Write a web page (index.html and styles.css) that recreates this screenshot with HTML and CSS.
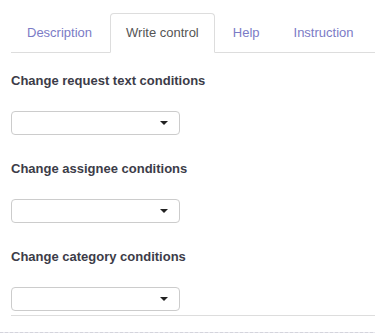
FILE: index.html
```html
<!DOCTYPE html>
<html>
<head>
<meta charset="utf-8">
<link rel="stylesheet" href="styles.css">
</head>
<body>
<div class="page">
  <ul class="tabs">
    <li class="tab"><a href="#">Description</a></li>
    <li class="tab active"><a href="#">Write control</a></li>
    <li class="tab"><a href="#">Help</a></li>
    <li class="tab"><a href="#">Instruction</a></li>
  </ul>
  <div class="form">
    <div class="group">
      <div class="label">Change request text conditions</div>
      <div class="select"><span class="caret"></span></div>
    </div>
    <div class="group">
      <div class="label">Change assignee conditions</div>
      <div class="select"><span class="caret"></span></div>
    </div>
    <div class="group">
      <div class="label">Change category conditions</div>
      <div class="select"><span class="caret"></span></div>
    </div>
  </div>
  <div class="rule"></div>
</div>
<div class="footer"></div>
</body>
</html>
```
FILE: styles.css
```css
html, body {
  margin: 0;
  padding: 0;
  background: #fff;
  font-family: "Liberation Sans", Arial, sans-serif;
  font-size: 13px;
}
.page {
  padding: 13px 0 0 11px;
}
.tabs {
  display: flex;
  list-style: none;
  margin: 0;
  padding: 0;
  border-bottom: 1px solid #ddd;
}
.tab {
  margin-bottom: -1px;
  margin-right: 2px;
}
.tab a {
  display: block;
  padding: 10px 15px;
  line-height: 18px;
  border: 1px solid transparent;
  border-radius: 4px 4px 0 0;
  color: #7b7bc6;
  text-decoration: none;
}
.tab.active a {
  color: #555;
  background: #fff;
  border-color: #ddd #ddd transparent;
}
.form {
  padding-top: 19px;
}
.group + .group {
  margin-top: 25px;
}
.label {
  font-weight: bold;
  line-height: 18px;
  color: #3c3c48;
  margin-bottom: 21px;
}
.select {
  width: 169px;
  height: 24px;
  box-sizing: border-box;
  border: 1px solid #ccc;
  border-radius: 4px;
  display: flex;
  align-items: center;
  justify-content: flex-end;
  padding-right: 11px;
}
.caret {
  width: 0;
  height: 0;
  border-left: 4px solid transparent;
  border-right: 4px solid transparent;
  border-top: 4px solid #222;
}
.rule {
  margin-top: 4px;
  border-top: 1px solid #ddd;
}
.footer {
  margin-top: 16px;
  height: 2px;
  background: repeating-linear-gradient(to right, #d4d4dc 0 3px, #e8e8ee 3px 5px);
}
```
